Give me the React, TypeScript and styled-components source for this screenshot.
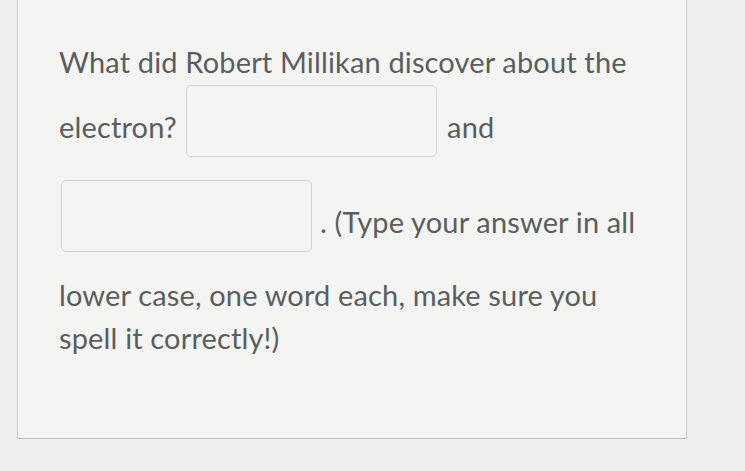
import React from 'react';
import styled, { createGlobalStyle } from 'styled-components';

const GlobalStyle = createGlobalStyle`
	html, body {
		margin: 0;
		padding: 0;
		background: #eff1ee;
	}
`;

const Page = styled.div`
	width: 745px;
	height: 471px;
	box-sizing: border-box;
	padding: 0 0 0 17px;
	overflow: hidden;
`;

const Card = styled.section`
	box-sizing: border-box;
	width: 670px;
	height: 439px;
	padding: 40px 34px 0 41px;
	background: #f4f5f3;
	border: 1px solid #c9cbc8;
	border-top: none;
	border-bottom-color: #bdbfbc;
`;

const Question = styled.p`
	margin: 0;
	font-family: Lato, 'Liberation Sans', sans-serif;
	font-size: 29px;
	letter-spacing: 0.15px;
	line-height: 43px;
	color: #5b5e5e;
`;

interface IBlankProps {
	gapLeft?: number;
	gapRight?: number;
}

/* empty inline-block: its baseline is the bottom margin edge */
const Blank = styled.span<IBlankProps>`
	display: inline-block;
	box-sizing: border-box;
	width: 251px;
	height: 72px;
	margin: 2px ${({ gapRight }) => gapRight ?? 3}px 21px ${({ gapLeft }) => gapLeft ?? 1}px;
	vertical-align: -40px;
	border: 1px solid #cfd3d2;
	border-radius: 5px;
	background: #f5f6f4;
`;

export default function App(): JSX.Element {
	return (
		<>
			<GlobalStyle />
			<Page>
				<Card>
					<Question>
						What did Robert Millikan discover about the electron? <Blank /> and{' '}
						<Blank gapLeft={2} gapRight={8} />. (Type your answer in all lower case, one
						word each, make sure you spell it correctly!)
					</Question>
				</Card>
			</Page>
		</>
	);
}
